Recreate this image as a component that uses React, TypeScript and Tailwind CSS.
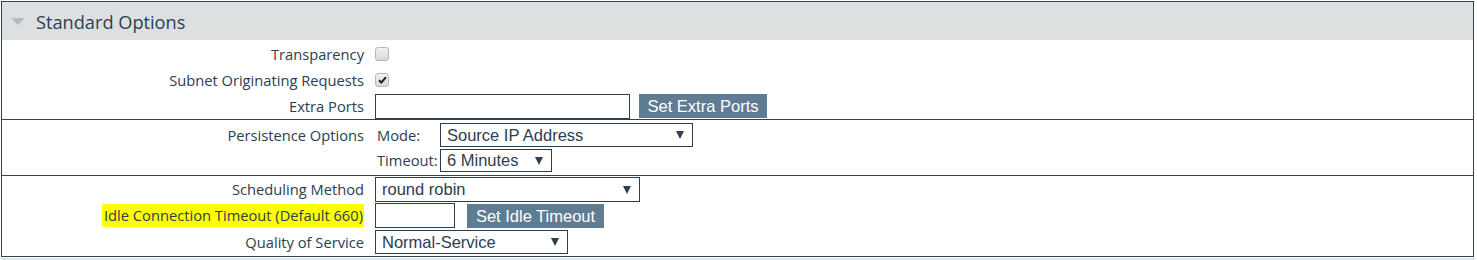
import { ReactNode } from 'react';

// ligne label + contrôle
function Row({ label, h, children, highlight }: { label: string; h: string; children: ReactNode; highlight?: boolean }) {
  return (
    <div className={`flex items-center ${h}`}>
      <div className="w-[362px] flex-none flex justify-end">
        <span className={highlight ? 'bg-[#ffff00] pl-[2px] pr-[1px] rounded-[2px] leading-[23px]' : ''}>{label}</span>
      </div>
      <div className="ml-[11px] flex items-center h-full">{children}</div>
    </div>
  );
}

function Checkbox({ checked }: { checked?: boolean }) {
  return (
    <span className="w-[14px] h-[14px] rounded-[3px] border border-[#b8b8b8] bg-gradient-to-b from-[#f2f2f2] to-[#d9d9d9] flex items-center justify-center">
      {checked && (
        <svg width="9" height="8" viewBox="0 0 9 8">
          <path d="M1 4.2 L3.4 6.5 L8 1.2" stroke="#222" strokeWidth="2" fill="none" />
        </svg>
      )}
    </span>
  );
}

function Select({ value, w, h }: { value: string; w: string; h: string }) {
  return (
    <div className={`relative ${w} ${h} border border-[#2c3e50] bg-white flex items-center pl-[6px] font-['Liberation_Sans',Arial,sans-serif] text-[16.5px] text-[#2c3e50]`}>
      {value}
      <span className="absolute right-[8px] top-1/2 -translate-y-1/2 w-0 h-0 border-l-[4px] border-r-[4px] border-t-[8px] border-l-transparent border-r-transparent border-t-[#2c3e50]" />
    </div>
  );
}

function Btn({ children, w }: { children: ReactNode; w: string }) {
  return (
    <button className={`${w} h-[24px] bg-[#5f7c93] text-white font-['Liberation_Sans',Arial,sans-serif] text-[16.5px] leading-[24px] text-center`}>
      {children}
    </button>
  );
}

export default function App() {
  return (
    <div className="bg-white w-[1477px] h-[260px] pt-px pl-px font-['Open_Sans',sans-serif] text-[14.7px] text-[#2c3e50]">
      <div className="w-[1473px] border border-[#34444f]">
        {/* entête */}
        <div className="h-[38px] bg-[#dce0e1] flex items-center">
          <span className="ml-[9px] w-0 h-0 border-l-[7px] border-r-[7px] border-t-[7px] border-l-transparent border-r-transparent border-t-[#b6bbbe]" />
          <span className="ml-[11px] mt-[2px] text-[18.2px] text-[#2c3e50] leading-none">Standard Options</span>
        </div>

        {/* section 1 */}
        <div className="pt-px">
          <Row label="Transparency" h="h-[26px]"><Checkbox /></Row>
          <Row label="Subnet Originating Requests" h="h-[26px]"><Checkbox checked /></Row>
          <Row label="Extra Ports" h="h-[26px]">
            <div className="w-[255px] h-[25px] border border-[#2c3e50] bg-white" />
            <div className="ml-[9px]"><Btn w="w-[128px]">Set Extra Ports</Btn></div>
          </Row>
        </div>
        <div className="h-px bg-[#34444f]" />

        {/* section 2 */}
        <div className="pt-[3px] pb-[3px] flex flex-col gap-[2px]">
          <Row label="Persistence Options" h="h-[24px]">
            <span className="w-[65px] pl-[2px]">Mode:</span>
            <Select value="Source IP Address" w="w-[253px]" h="h-[24px]" />
          </Row>
          <Row label="" h="h-[23px]">
            <span className="w-[65px] pl-[2px]">Timeout:</span>
            <Select value="6 Minutes" w="w-[112px]" h="h-[23px]" />
          </Row>
        </div>
        <div className="h-px bg-[#34444f]" />

        {/* section 3 */}
        <div className="pt-px pb-[2px] flex flex-col">
          <Row label="Scheduling Method" h="h-[25px]">
            <Select value="round robin" w="w-[265px]" h="h-[25px]" />
          </Row>
          <div className="mt-px">
            <Row label="Idle Connection Timeout (Default 660)" h="h-[25px]" highlight>
              <div className="w-[80px] h-[25px] border border-[#2c3e50] bg-white" />
              <div className="ml-[12px]"><Btn w="w-[137px]">Set Idle Timeout</Btn></div>
            </Row>
          </div>
          <div className="mt-[2px]">
            <Row label="Quality of Service" h="h-[24px]">
              <Select value="Normal-Service" w="w-[193px]" h="h-[24px]" />
            </Row>
          </div>
        </div>
      </div>
      <div className="mt-px w-[1474px] h-[2px] bg-[#e3e6e8]" />
    </div>
  );
}
